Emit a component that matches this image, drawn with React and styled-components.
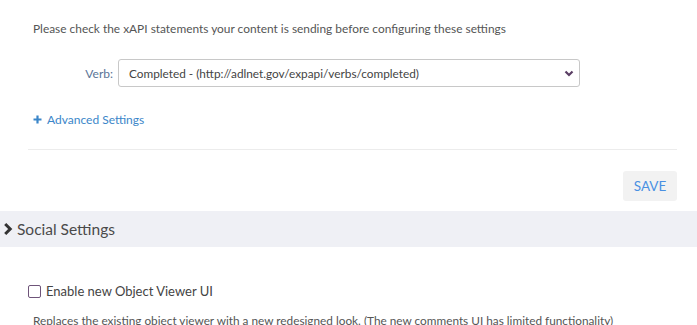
import styled, { createGlobalStyle } from "styled-components"

const Global = createGlobalStyle`
  body {
    margin: 0;
    background: #fff;
    font-family: Lato, "Open Sans", sans-serif;
    color: #555;
  }
`

const Page = styled.div`
  width: 697px;
  overflow: hidden;
`

const Section = styled.div`
  padding: 0 20px 0 28px;
`

const Intro = styled.p`
  margin: 0;
  padding: 21px 0 0 5px;
  font-size: 11.9px;
  line-height: 16px;
  color: #555;
`

const FormRow = styled.div`
  display: flex;
  align-items: center;
  margin-top: 22px;
`

const Label = styled.label`
  width: 85px;
  text-align: right;
  padding-right: 5px;
  font-size: 12px;
  color: #5b7597;
`

const SelectWrap = styled.div`
  position: relative;
  width: 462px;
  height: 28px;
`

const Select = styled.select`
  appearance: none;
  width: 100%;
  height: 100%;
  box-sizing: border-box;
  border: 1px solid #c8c8c8;
  border-radius: 3px;
  background: #fff;
  padding: 0 0 0 10px;
  font-family: Lato, sans-serif;
  font-size: 11.8px;
  color: #444;
`

const Chevron = styled.svg`
  position: absolute;
  right: 6px;
  top: 11px;
  pointer-events: none;
`

const AdvancedLink = styled.a`
  display: inline-flex;
  align-items: center;
  gap: 5px;
  margin: 25px 0 0 5px;
  font-size: 12px;
  color: #3b86c9;
  text-decoration: none;
  cursor: pointer;
`

const Divider = styled.hr`
  margin: 22px 0 0;
  border: 0;
  border-top: 1px solid #ececec;
`

const Actions = styled.div`
  display: flex;
  justify-content: flex-end;
  margin-top: 21px;
`

const SaveButton = styled.button`
  width: 54px;
  height: 30px;
  border: 0;
  border-radius: 3px;
  background: #f2f2f2;
  color: #4a90e2;
  font-family: Lato, sans-serif;
  font-size: 13.5px;
  cursor: pointer;
`

const PanelHeader = styled.div`
  display: flex;
  align-items: center;
  gap: 4px;
  height: 36px;
  margin-top: 10px;
  padding-left: 3px;
  background: #eff0f5;
  font-size: 15.5px;
  color: #4a4a4a;
`

const PanelBody = styled.div`
  padding: 36px 20px 0 28px;
`

const CheckRow = styled.label`
  display: flex;
  align-items: center;
  gap: 5px;
  font-size: 13px;
  color: #444;
`

const Box = styled.span`
  width: 11px;
  height: 11px;
  border: 1px solid #6e5479;
  border-radius: 2px;
`

const Help = styled.p`
  margin: 14px 0 0 5px;
  font-size: 11.8px;
  line-height: 16px;
  color: #555;
  white-space: nowrap;
`

export default function App() {
  return (
    <Page>
      <Global />
      <Section>
        <Intro>Please check the xAPI statements your content is sending before configuring these settings</Intro>
        <FormRow>
          <Label>Verb:</Label>
          <SelectWrap>
            <Select defaultValue="completed">
              <option value="completed">Completed - (http://adlnet.gov/expapi/verbs/completed)</option>
            </Select>
            <Chevron width="10" height="7" viewBox="0 0 10 7">
              <path d="M1.5 1.5 L5 5 L8.5 1.5" fill="none" stroke="#5a3e64" strokeWidth="2.2" />
            </Chevron>
          </SelectWrap>
        </FormRow>
        <AdvancedLink>
          <svg width="9" height="9" viewBox="0 0 9 9">
            <path d="M4.5 0.5 V8.5 M0.5 4.5 H8.5" stroke="#3b86c9" strokeWidth="2.2" />
          </svg>
          Advanced Settings
        </AdvancedLink>
        <Divider />
        <Actions>
          <SaveButton>SAVE</SaveButton>
        </Actions>
      </Section>
      <PanelHeader>
        <svg width="10" height="14" viewBox="0 0 10 14">
          <path d="M2.2 2 L7.2 7 L2.2 12" fill="none" stroke="#333" strokeWidth="3" />
        </svg>
        Social Settings
      </PanelHeader>
      <PanelBody>
        <CheckRow>
          <Box />
          Enable new Object Viewer UI
        </CheckRow>
        <Help>Replaces the existing object viewer with a new redesigned look. (The new comments UI has limited functionality)</Help>
      </PanelBody>
    </Page>
  )
}
